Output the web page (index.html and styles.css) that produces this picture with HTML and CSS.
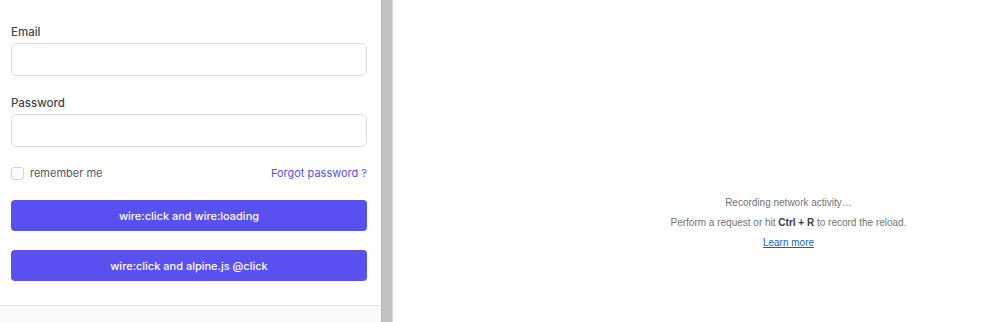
FILE: index.html
```html
<!DOCTYPE html>
<html>
<head>
<meta charset="utf-8">
<link rel="stylesheet" href="styles.css">
</head>
<body>
<div class="app">
  <div class="left">
    <div class="form">
      <label class="label">Email</label>
      <div class="input"></div>
      <label class="label pw">Password</label>
      <div class="input"></div>
      <div class="row">
        <div class="check"><span class="box"></span><span>remember me</span></div>
        <a class="forgot">Forgot password ?</a>
      </div>
      <button class="btn first">wire:click and wire:loading</button>
      <button class="btn">wire:click and alpine.js @click</button>
    </div>
    <div class="foot"></div>
  </div>
  <div class="divider"></div>
  <div class="right">
    <div class="empty">
      <div>Recording network activity…</div>
      <div class="l2">Perform a request or hit <b>Ctrl + R</b> to record the reload.</div>
      <a class="l3">Learn more</a>
    </div>
  </div>
</div>
</body>
</html>
```
FILE: styles.css
```css
html, body { margin: 0; padding: 0; height: 100%; overflow: hidden; background: #fff; }
.app { display: flex; height: 322px; }
.left { width: 380px; display: flex; flex-direction: column; font-family: Inter, "Noto Sans", sans-serif; }
.form { padding: 24px 13px 0 11px; display: flex; flex-direction: column; height: 281px; box-sizing: border-box; }
.label { font-size: 11.5px; line-height: 16px; color: #40444c; font-weight: 500; }
.input { margin-top: 3px; height: 33px; box-sizing: border-box; border: 1px solid #d9dce1; border-radius: 5px; background: #fff; }
.pw { margin-top: 19px; }
.row { margin-top: 19px; display: flex; justify-content: space-between; align-items: center; height: 14px; font-size: 11px; }
.check { display: flex; align-items: center; gap: 6px; color: #55575e; }
.box { width: 13px; height: 13px; border: 1px solid #cfd3d9; border-radius: 3px; box-sizing: border-box; }
.forgot { color: #5b51e8; }
.btn { margin-top: 20px; height: 31px; border: none; border-radius: 4px; background: #5850ef; color: #fff; font-family: Inter, "Noto Sans", sans-serif; font-size: 11px; font-weight: 500; padding: 0; }
.btn + .btn { margin-top: 19px; }
.foot { margin-top: 24px; flex: 1; background: #f8f9fb; border-top: 1px solid #e6e8ec; }
.divider { width: 12px; margin-left: 1px; background: #c2c2c2; border-left: 1px solid #b5b5b5; border-right: 1px solid #d6d6d6; box-sizing: border-box; }
.right { flex: 1; display: flex; align-items: center; justify-content: center; padding-left: 184px; font-family: "Liberation Sans", "Noto Sans", sans-serif; font-size: 10px; color: #737373; }
.empty { display: flex; flex-direction: column; align-items: center; padding-top: 123px; }
.empty > * { line-height: 20px; }
.l2 b { color: #3c3c3c; }
.l3 { color: #1a5fb4; text-decoration: underline; }
```
